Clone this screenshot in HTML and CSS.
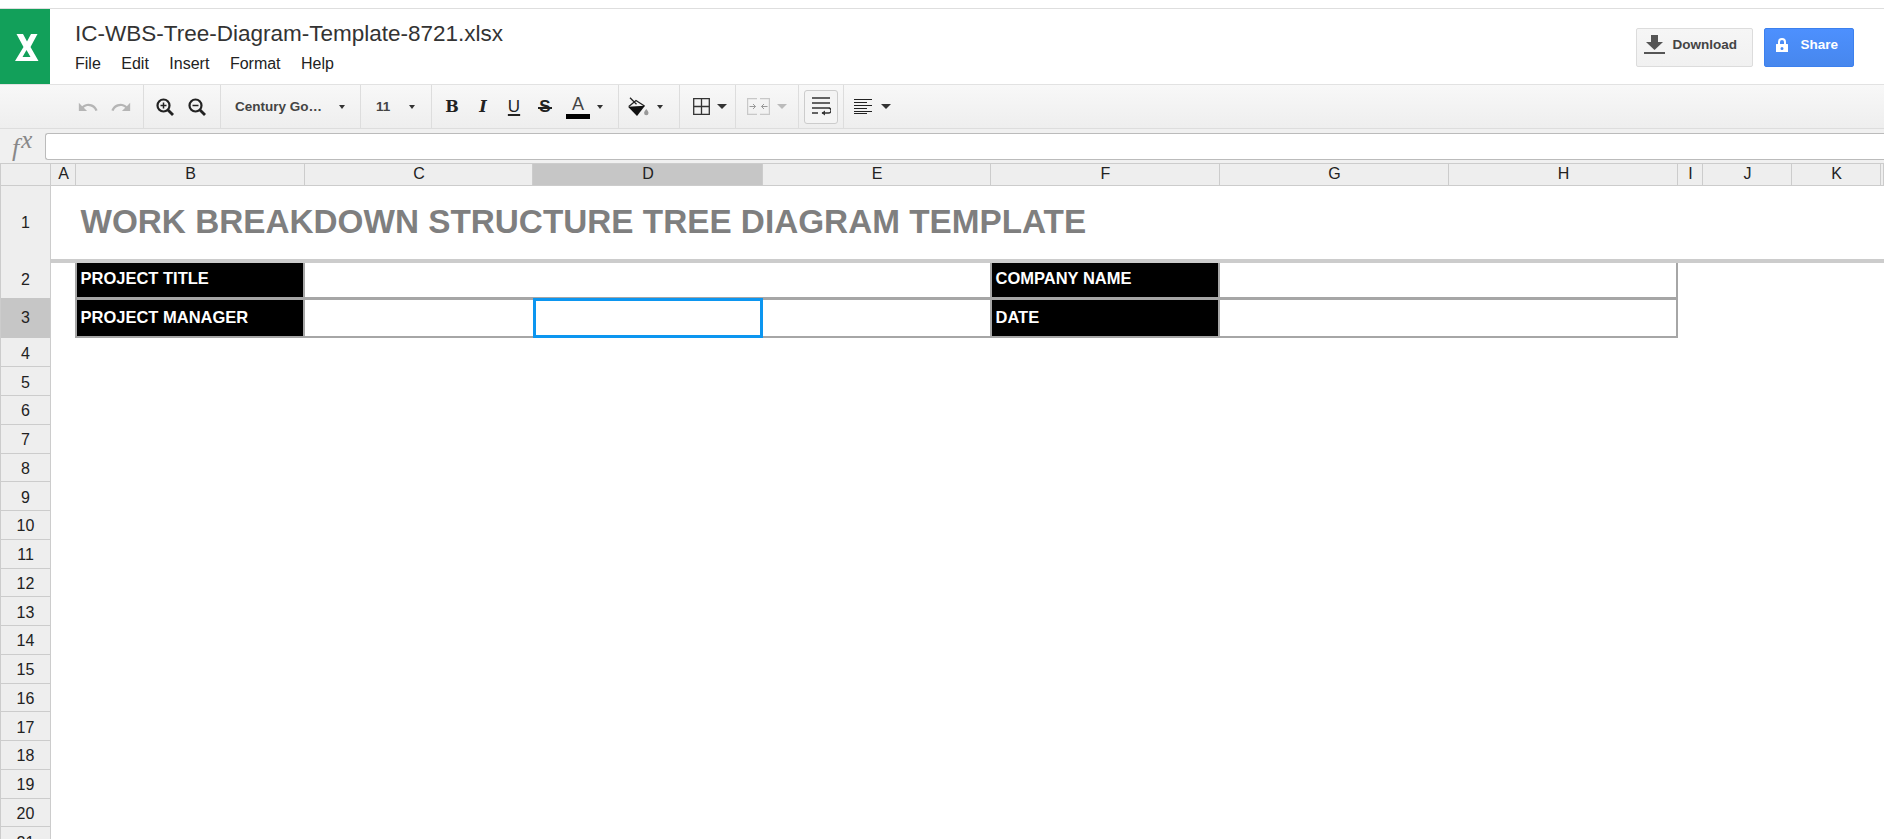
FILE: index.html
```html
<!DOCTYPE html>
<html lang="en">
<head>
    <meta charset="UTF-8">
    <title>IC-WBS-Tree-Diagram-Template-8721.xlsx</title>
    <link rel="stylesheet" href="styles.css">
</head>
<body>

    <div class="topline"></div>

    <header class="header">
        <div class="logo">
            <svg width="24" height="27" viewBox="0 0 24 27"><path fill="#fff" fill-rule="evenodd" d="M1.500 0H8l4 7.500L16 0h6.500L15.500 13 23.500 27H0l8.500-14zM11.500 16L7.500 23h8z"/></svg>
        </div>
        <div class="doc">
            <div class="doc-title">IC-WBS-Tree-Diagram-Template-8721.xlsx</div>
            <nav class="menu">
                <span>File</span>
                <span>Edit</span>
                <span>Insert</span>
                <span>Format</span>
                <span>Help</span>
            </nav>
        </div>
        <div class="actions">
            <div class="btn btn-download">
                <svg width="21" height="19" viewBox="0 0 21 19"><path fill="#555" d="M7 0h7v7h5l-8.500 8L2 7h5zM0 17h21v2H0z"/></svg>
                <span>Download</span>
            </div>
            <div class="btn btn-share">
                <svg width="12" height="14" viewBox="0 0 12 14"><path fill="#fff" fill-rule="evenodd" d="M2 6V4a4 4 0 0 1 8 0v2h1.500a.5.5 0 0 1 .5.5V14H0V6.500A.5.5 0 0 1 .5 6zm2 0h4V4a2 2 0 0 0-4 0zm2 3a1.500 1.500 0 1 0 0 3 1.500 1.500 0 0 0 0-3z"/></svg>
                <span>Share</span>
            </div>
        </div>
    </header>

    <div class="toolbar">
        <div class="group group-history">
            <svg width="22" height="15" viewBox="0 4 24 14"><path fill="#b5b5b5" d="M12.500 8c-2.650 0-5.050.99-6.900 2.600L2 7v9h9l-3.620-3.620c1.390-1.160 3.160-1.880 5.120-1.880 3.540 0 6.550 2.310 7.600 5.500l2.370-.78C21.080 11.030 17.150 8 12.500 8z"/></svg>
            <svg width="22" height="15" viewBox="0 4 24 14"><path fill="#b5b5b5" transform="matrix(-1 0 0 1 24 0)" d="M12.500 8c-2.650 0-5.050.99-6.900 2.600L2 7v9h9l-3.620-3.620c1.390-1.160 3.160-1.880 5.120-1.880 3.540 0 6.550 2.310 7.600 5.500l2.370-.78C21.080 11.030 17.150 8 12.500 8z"/></svg>
        </div>
        <div class="group group-zoom">
            <svg width="18" height="18" viewBox="0 0 18 18" fill="none" stroke="#222"><circle cx="7.500" cy="7.500" r="6" stroke-width="2.200"/><path stroke-width="2.800" d="M12 12l5 5"/><path stroke-width="1.500" d="M4.500 7.500h6M7.500 4.500v6"/></svg>
            <svg width="18" height="18" viewBox="0 0 18 18" fill="none" stroke="#222"><circle cx="7.500" cy="7.500" r="6" stroke-width="2.200"/><path stroke-width="2.800" d="M12 12l5 5"/><path stroke-width="1.500" d="M4.500 7.500h6"/></svg>
        </div>
        <div class="group group-font">
            <span class="select-text font-name">Century Go…</span>
            <i class="caret"></i>
        </div>
        <div class="group group-size">
            <span class="select-text font-size">11</span>
            <i class="caret"></i>
        </div>
        <div class="group group-style">
            <span class="style-btn style-bold">B</span>
            <span class="style-btn style-italic">I</span>
            <span class="style-btn style-under">U</span>
            <span class="style-btn style-strike">S</span>
            <span class="style-btn style-color">A<b></b></span>
            <i class="caret"></i>
        </div>
        <div class="group group-fill">
            <svg width="21" height="19" viewBox="0 0 21 19"><path fill="none" stroke="#222" stroke-width="1.300" d="M2 .7l6.500 6.500M.8 9.500L8 3.500l8.500 5.500"/><path fill="#111" d="M0 9.800L17 8.800 9 19z"/><path fill="#999" d="M18.300 12c1 1.300 2.200 2.600 2.200 4a2.200 2.200 0 0 1-4.400 0c0-1.400 1.200-2.700 2.200-4z"/></svg>
            <i class="caret"></i>
        </div>
        <div class="group group-borders">
            <svg width="17" height="17" viewBox="0 0 17 17" fill="none" stroke="#333" stroke-width="1.300"><path d="M.7.7h15.600v15.600H.7zM8.500.7v15.600M.7 8.500h15.600"/></svg>
            <i class="caret caret-big"></i>
        </div>
        <div class="group group-merge">
            <svg width="23" height="17" viewBox="0 0 23 17" fill="none" stroke="#c8c8c8" stroke-width="1.200"><path d="M10 .6H.6v15.800H10M13 .6h9.400v15.800H13"/><path stroke="#999" stroke-width="1" d="M2.500 8.500h6M6 6l2.500 2.500L6 11M20.500 8.500h-6M17 6l-2.500 2.500L17 11"/></svg>
            <i class="caret caret-big caret-off"></i>
        </div>
        <div class="group group-wrap">
            <div class="wrap-btn">
                <svg width="19" height="20" viewBox="0 0 19 20" fill="none" stroke="#333" stroke-width="1.300"><path d="M0 1h18M0 6h18M0 11h18M0 16h6M10 16h6.500a2.200 2.200 0 0 0 0-5"/><path fill="#333" stroke="none" d="M13 13.500v5l-3.500-2.500z"/></svg>
            </div>
        </div>
        <div class="group group-align">
            <svg width="18" height="15" viewBox="0 0 18 15" fill="none" stroke="#222"><path d="M0 .5h18M0 3.500h13M0 6.500h18M0 9.500h13M0 12.500h18" stroke-width="1.200"/><path d="M0 14.500h13"/></svg>
            <i class="caret caret-big"></i>
        </div>
    </div>

    <div class="formula">
        <div class="fx">f<sup>x</sup></div>
        <div class="formula-input"></div>
    </div>

    <div class="sheet">
        <div class="corner"></div>
        <div class="col">A</div>
        <div class="col">B</div>
        <div class="col">C</div>
        <div class="col col-active">D</div>
        <div class="col">E</div>
        <div class="col">F</div>
        <div class="col">G</div>
        <div class="col">H</div>
        <div class="col">I</div>
        <div class="col">J</div>
        <div class="col">K</div>
        <div class="col"></div>

        <div class="row-head row-head-tall">1</div>
        <div class="title">WORK BREAKDOWN STRUCTURE TREE DIAGRAM TEMPLATE</div>

        <div class="row-head">2</div>
        <div class="blank"></div>
        <div class="label">PROJECT TITLE</div>
        <div class="value span-3"></div>
        <div class="label">COMPANY NAME</div>
        <div class="value span-2 value-end"></div>

        <div class="row-head row-head-active">3</div>
        <div class="blank"></div>
        <div class="label label-low">PROJECT MANAGER</div>
        <div class="value value-low"></div>
        <div class="selected"></div>
        <div class="value value-low"></div>
        <div class="label label-low">DATE</div>
        <div class="value value-low span-2 value-end"></div>

        <div class="row-head row-head-line">4</div>
        <div class="row-head row-head-line">5</div>
        <div class="row-head row-head-line">6</div>
        <div class="row-head row-head-line">7</div>
        <div class="row-head row-head-line">8</div>
        <div class="row-head row-head-line">9</div>
        <div class="row-head row-head-line">10</div>
        <div class="row-head row-head-line">11</div>
        <div class="row-head row-head-line">12</div>
        <div class="row-head row-head-line">13</div>
        <div class="row-head row-head-line">14</div>
        <div class="row-head row-head-line">15</div>
        <div class="row-head row-head-line">16</div>
        <div class="row-head row-head-line">17</div>
        <div class="row-head row-head-line">18</div>
        <div class="row-head row-head-line">19</div>
        <div class="row-head row-head-line">20</div>
        <div class="row-head row-head-line">21</div>
    </div>

</body>
</html>
```

FILE: styles.css
```css
* {
    box-sizing: border-box;
}

html, body {
    height: 100%;
}

body {
    margin: 0;
    overflow: hidden;
    background: #fff;
    color: #222;
    font-family: "Liberation Sans", Arial, sans-serif;
}

.topline {
    height: 9px;
    border-bottom: 1px solid #dedede;
}

/* header */
.header {
    display: flex;
    height: 75px;
}

.logo {
    display: flex;
    justify-content: center;
    align-items: center;
    width: 50px;
    padding-left: 3px;
    background: #12a05a;
}

.logo svg {
    margin-top: 1px;
}

.doc {
    padding-left: 25px;
}

.doc-title {
    margin-top: 11px;
    font-size: 22.500px;
    line-height: 28px;
    color: #333;
}

.menu {
    display: flex;
    gap: 20.500px;
    margin-top: 6px;
    font-size: 16px;
    line-height: 20px;
}

.actions {
    display: flex;
    gap: 11px;
    margin: 19px 30px 0 auto;
}

.btn {
    display: flex;
    height: 39px;
    border-radius: 2px;
    font-size: 13.500px;
    font-weight: bold;
    line-height: 31px;
}

.btn-download {
    width: 117px;
    padding-left: 7px;
    gap: 7.500px;
    border: 1px solid #dcdcdc;
    background: linear-gradient(#f6f6f6, #f1f1f1);
    color: #444;
}

.btn-download svg {
    margin-top: 6px;
}

.btn-share {
    width: 90px;
    padding-left: 11px;
    gap: 12.500px;
    border: 1px solid #3c80ee;
    background: linear-gradient(#4d90fe, #4787ed);
    color: #fff;
}

.btn-share svg {
    margin-top: 9px;
}

/* toolbar */
.toolbar {
    display: flex;
    height: 50px;
    border-top: 1px solid #e2e2e2;
    border-bottom: 1px solid #bbb;
    background: #f0f0f0;
    padding-bottom: 4px;
}

.toolbar::after {
    content: "";
    flex: 1;
    border-bottom: 1px solid #ddd;
    background: linear-gradient(#f8f8f8, #eee);
}

.group {
    display: flex;
    align-items: center;
    flex: none;
    border-right: 1px solid #ddd;
    border-bottom: 1px solid #ddd;
    background: linear-gradient(#f8f8f8, #eee);
}

.group-history {
    width: 144px;
    padding-left: 77px;
    gap: 11px;
}

.group-zoom {
    width: 77px;
    padding-left: 12px;
    gap: 14px;
}

.group-font {
    width: 140px;
    padding-left: 14px;
}

.group-size {
    width: 71px;
    padding-left: 15px;
}

.select-text {
    font-size: 13.500px;
    font-weight: bold;
    color: #444;
}

.font-name {
    width: 104px;
}

.font-size {
    width: 33px;
}

.caret {
    width: 0;
    height: 0;
    border-left: 3.500px solid transparent;
    border-right: 3.500px solid transparent;
    border-top: 4px solid #333;
}

.caret-big {
    border-left-width: 5px;
    border-right-width: 5px;
    border-top-width: 5px;
}

.caret-off {
    border-top-color: #bbb;
}

.group-style {
    width: 187px;
    padding-left: 10px;
    gap: 11px;
}

.style-btn {
    width: 20px;
    text-align: center;
    color: #222;
    font-size: 18px;
    line-height: 20px;
}

.style-bold {
    font-family: "DejaVu Serif", serif;
    font-size: 16px;
    font-weight: bold;
}

.style-italic {
    font-family: "DejaVu Serif", serif;
    font-size: 16px;
    font-style: italic;
    font-weight: bold;
}

.style-under {
    font-size: 17px;
    text-decoration: underline;
    text-decoration-thickness: 2px;
    text-underline-offset: 2px;
}

.style-strike {
    position: relative;
    font-size: 17px;
    font-weight: bold;
}

.style-strike::after {
    content: "";
    position: absolute;
    left: 3px;
    right: 3px;
    top: 10px;
    height: 2px;
    background: #222;
}

.style-color {
    width: 24px;
    height: 24px;
    line-height: 19px;
    color: #444;
}

.style-color b {
    display: block;
    height: 5px;
    background: #000;
}

.group-style .caret {
    margin-left: -4px;
}

.group-fill {
    width: 61px;
    padding-left: 9px;
    gap: 8px;
}

.group-borders {
    width: 56px;
    padding-left: 13px;
    gap: 7px;
}

.group-merge {
    width: 63px;
    padding-left: 11px;
    gap: 7px;
}

.group-wrap {
    width: 45px;
    padding-left: 5px;
}

.wrap-btn {
    display: flex;
    justify-content: center;
    align-items: center;
    width: 34px;
    height: 34px;
    border: 1px solid #ccc;
    border-radius: 3px;
    background: #f4f4f4;
}

.group-align {
    width: 70px;
    padding-left: 10px;
    gap: 9px;
    border-right: 0;
}

/* formula bar */
.formula {
    display: flex;
    height: 31px;
    margin-top: -1px;
    border-bottom: 1px solid #ccc;
    background: #f0f0f0;
}

.fx {
    width: 45px;
    padding: 1px 0 0 12px;
    color: #888;
    font-family: "Liberation Serif", serif;
    font-size: 26px;
    font-style: italic;
    line-height: 27px;
    white-space: nowrap;
}

.fx sup {
    margin-left: 2px;
    font-size: 25px;
    line-height: 0;
    vertical-align: 8px;
}

.formula-input {
    flex: 1;
    height: 27px;
    border: 1px solid #bbb;
    border-right: 0;
    border-radius: 3px 0 0 3px;
    background: #fff;
}

/* sheet */
.sheet {
    display: grid;
    grid-template-columns: 51px 25px 229px 228px 230px 228px 229px 229px 229px 25px 89px 89px 1fr;
    grid-template-rows: 22px 77px 35px 40px 29.250px;
    grid-auto-rows: 28.750px;
    font-size: 16px;
}

.corner {
    background: #eee;
    border-left: 1px solid #ccc;
    border-right: 1px solid #ccc;
    border-bottom: 1px solid #ccc;
}

.col {
    padding-left: 1px;
    border-right: 1px solid #ccc;
    border-bottom: 1px solid #ccc;
    background: #eee;
    text-align: center;
    line-height: 20px;
}

.col-active {
    background: #c6c6c6;
}

.row-head {
    display: flex;
    justify-content: center;
    align-items: center;
    grid-column: 1;
    padding-bottom: 1px;
    border-left: 1px solid #ccc;
    border-right: 1px solid #ccc;
    background: #eee;
}

.row-head-tall {
    padding-bottom: 4px;
}

.row-head-active {
    background: #c6c6c6;
    padding-bottom: 0;
}

.row-head-line {
    padding: 3px 0 0;
    border-bottom: 1px solid #ccc;
}

.title {
    grid-column: 2 / -1;
    padding: 17px 0 0 29.500px;
    border-bottom: 4px solid #ccc;
    color: #7f7f7f;
    font-size: 33.300px;
    font-weight: bold;
    line-height: 38px;
    white-space: nowrap;
}

.label {
    margin-left: -1px;
    padding: 6px 0 0 3.500px;
    border: 2px solid #a6a6a6;
    border-top: 0;
    border-bottom-width: 1px;
    background: #000;
    color: #fff;
    font-size: 16.500px;
    font-weight: bold;
    line-height: 19px;
}

.label-low {
    padding-top: 8px;
    border-top: 2px solid #a6a6a6;
    border-bottom-width: 2px;
}

.value {
    border-bottom: 1px solid #a6a6a6;
}

.value-low {
    border-top: 2px solid #a6a6a6;
    border-bottom: 2px solid #a6a6a6;
}

.value-end {
    border-right: 2px solid #a6a6a6;
}

.span-2 {
    grid-column: span 2;
}

.span-3 {
    grid-column: span 3;
}

.selected {
    border: 3px solid #0c96f0;
}
```
